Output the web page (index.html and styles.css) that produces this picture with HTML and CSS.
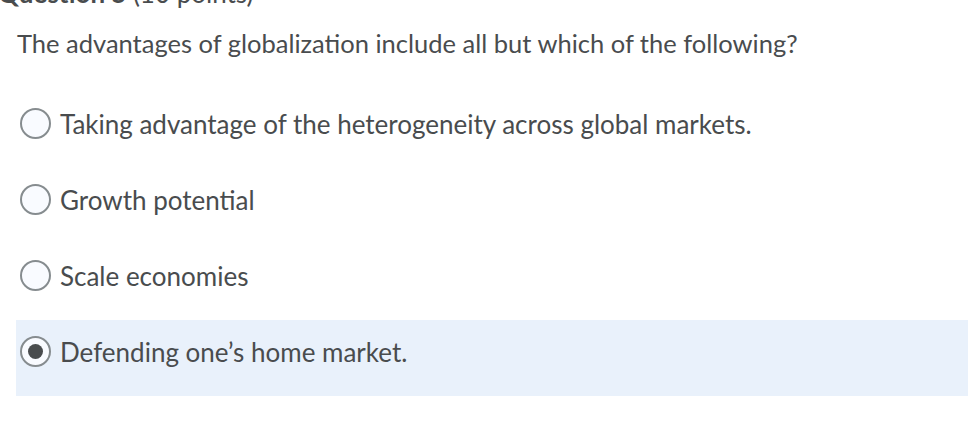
FILE: index.html
```html
<!DOCTYPE html>
<html lang="en">
<head>
<meta charset="utf-8">
<link rel="stylesheet" href="styles.css">
</head>
<body>
<div class="page">
  <h2 class="q-title">Question 5 <span class="pts">(10 points)</span></h2>
  <p class="q-text">The advantages of globalization include all but which of the following?</p>
  <div class="options">
    <label class="opt"><span class="radio"></span><span class="opt-text">Taking advantage of the heterogeneity across global markets.</span></label>
    <label class="opt"><span class="radio"></span><span class="opt-text">Growth potential</span></label>
    <label class="opt"><span class="radio"></span><span class="opt-text">Scale economies</span></label>
    <label class="opt selected"><span class="radio checked"></span><span class="opt-text">Defending one’s home market.</span></label>
  </div>
</div>
</body>
</html>
```
FILE: styles.css
```css
html, body {
  margin: 0;
  padding: 0;
  background: #ffffff;
}
body {
  font-family: Lato, "Noto Sans", sans-serif;
  color: #494c4e;
  overflow: hidden;
}
.page {
  display: flex;
  flex-direction: column;
  width: 968px;
}
.q-title {
  margin: -21px 0 0 -2px;
  font-size: 26px;
  font-weight: 700;
  line-height: 28px;
  color: #494c4e;
}
.q-title .pts {
  font-weight: 400;
}
.q-text {
  margin: 21px 0 0 17px;
  font-size: 25.5px;
  line-height: 30px;
}
.options {
  display: flex;
  flex-direction: column;
  margin-top: 34px;
  padding-left: 16px;
}
.opt {
  display: flex;
  align-items: center;
  height: 76px;
  box-sizing: border-box;
  padding: 0 0 13px 4px;
  gap: 9px;
  font-size: 26px;
}
.opt.selected {
  background: #e9f1fb;
}
.radio {
  width: 31px;
  height: 31px;
  box-sizing: border-box;
  border: 2px solid #868c8f;
  border-radius: 50%;
  background: #f9fbff;
  display: flex;
  align-items: center;
  justify-content: center;
  flex: none;
}
.radio.checked::after {
  content: "";
  width: 15px;
  height: 15px;
  border-radius: 50%;
  background: #494c4e;
}
.opt-text {
  line-height: 30px;
}
```
